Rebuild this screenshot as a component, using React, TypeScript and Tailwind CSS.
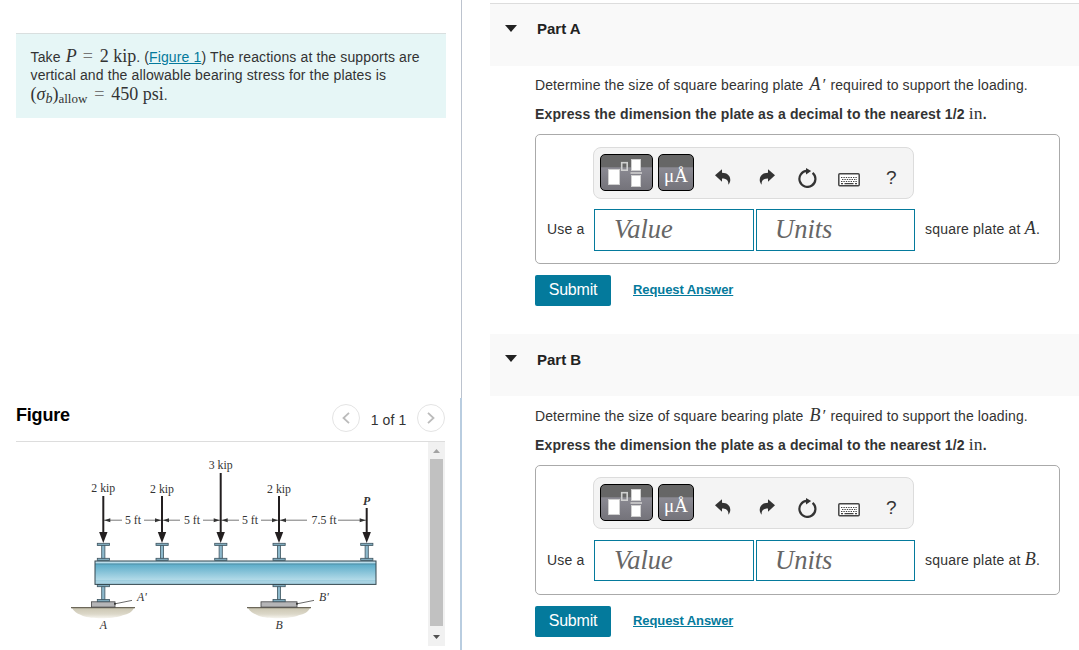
interface PartProps {
  letter: string;
}

const loads = [
  { x: 103.3, top: 496, label: '2 kip', labelY: 491.5 },
  { x: 162, top: 496, label: '2 kip', labelY: 492.5 },
  { x: 220.7, top: 473, label: '3 kip', labelY: 468.5 },
  { x: 279, top: 496, label: '2 kip', labelY: 492.5 },
  { x: 366.7, top: 508, label: 'P', labelY: 504.5 },
];

const spans = [
  { from: 103.3, to: 162, textX: 133, label: '5 ft', gapL: 122, gapR: 144 },
  { from: 162, to: 220.7, textX: 192, label: '5 ft', gapL: 180, gapR: 203 },
  { from: 220.7, to: 279, textX: 250, label: '5 ft', gapL: 239, gapR: 261 },
  { from: 279, to: 366.7, textX: 324, label: '7.5 ft', gapL: 307, gapR: 338 },
];

const supports = [
  { x: 103.3, padL: 91.5, padR: 115, groundL: 71, label: 'A', tagX: 137 },
  { x: 279, padL: 261, padR: 297, groundL: 247, label: 'B', tagX: 319 },
];

// Short I-section that carries the load into the beam
function Stub({ x, y }: { x: number; y: number }) {
  return (
    <g stroke="#3f5560" strokeWidth="0.8">
      <rect x={x - 1.6} y={y + 1.5} width="3.2" height="14" fill="#8db9cc" />
      <rect x={x - 6} y={y} width="12.2" height="2.2" fill="#7fa9bb" />
      <rect x={x - 6} y={y + 15} width="12.2" height="2.2" fill="#7fa9bb" />
    </g>
  );
}

function BeamFigure() {
  return (
    <svg viewBox="16 442 412 204" className="h-[204px] w-[412px] shrink-0" fontFamily="'Liberation Serif', serif" fontSize="11.8" fill="#333">
      <defs>
        <linearGradient id="beam" x1="0" y1="0" x2="0" y2="1">
          <stop offset="0.1" stopColor="#57a9c7" />
          <stop offset="0.8" stopColor="#b0d9e7" />
          <stop offset="1" stopColor="#a5d0e0" />
        </linearGradient>
        <linearGradient id="soil" x1="0" y1="0" x2="0" y2="1">
          <stop offset="0" stopColor="#cbc6b2" />
          <stop offset="0.6" stopColor="#dcd8c9" />
          <stop offset="1" stopColor="#f6f4ee" />
        </linearGradient>
      </defs>

      {supports.map(s => (
        <g key={s.label}>
          <path d={`M${s.groundL + 1} 608h62c-3 6-8 6-13 8-9 3-30 3-38 0-4-2-8-3-11-8z`} fill="url(#soil)" />
          <path d={`M${s.groundL} 607.6h64`} stroke="#6c6759" strokeWidth="1.3" />
          <rect x={s.padL} y="601.8" width={s.padR - s.padL} height="5.3" fill="#b5b5b7" stroke="#444" strokeWidth="0.8" />
          <Stub x={s.x} y={584.5} />
          <path d={`M${s.padR - 1} 604l18-3.6`} stroke="#444" strokeWidth="0.8" />
          <circle cx={s.padR} cy="603.8" r="1" />
          <text x={s.tagX} y="600.5" fontStyle="italic">{s.label}'</text>
          <text x={s.x} y="628.5" textAnchor="middle" fontStyle="italic">{s.label}</text>
        </g>
      ))}

      <rect x="95" y="561" width="281" height="23" fill="url(#beam)" />
      <rect x="95" y="561" width="281" height="2.5" fill="#b9dcea" />
      <path d="M95 564h281" stroke="#4d8499" strokeWidth="0.7" />
      <path d="M95 580.7h281" stroke="#8fc4d7" strokeWidth="0.6" />
      <rect x="95" y="561" width="281" height="23.4" fill="none" stroke="#34474f" strokeWidth="1" />

      {spans.map(s => (
        <g key={s.from}>
          <path d={`M${s.from} 520.2H${s.gapL}M${s.gapR} 520.2H${s.to}`} stroke="#555" strokeWidth="0.8" />
          <path d={`M${s.from + 1} 520.2l6-2v4zM${s.to - 1} 520.2l-6-2v4z`} />
          <text x={s.textX} y="523.5" textAnchor="middle">{s.label}</text>
        </g>
      ))}

      {loads.map(l => (
        <g key={l.x}>
          <Stub x={l.x} y={543.3} />
          <path d={`M${l.x} ${l.top}V534`} stroke="#231f20" strokeWidth="2" />
          <path d={`M${l.x - 4.2} 532h8.4l-4.2 11z`} fill="#231f20" />
          <text x={l.x} y={l.labelY} textAnchor="middle" fontStyle={l.label === 'P' ? 'italic' : 'normal'} fontWeight={l.label === 'P' ? 700 : 400}>
            {l.label}
          </text>
        </g>
      ))}
    </svg>
  );
}

function Toolbar() {
  return (
    <div className="flex h-[52px] w-[321px] items-start rounded-lg border border-[#dcdcdc] bg-[#f4f4f4] pt-[6px] pl-[6px] text-[#333]">
      <button className="h-[37px] w-[53px] rounded-[5px] border border-black bg-linear-to-b from-[#666] from-35% via-[#8b8a93] via-36% to-[#74737a]">
        <svg viewBox="0 0 51 35" className="h-[35px] w-[51px]" fill="#fff" stroke="#d0d0d0">
          <rect x="7.5" y="14.5" width="11" height="15" />
          <rect x="20.7" y="7.7" width="5.5" height="7.5" fill="none" strokeWidth="1.6" />
          <rect x="30.5" y="4.5" width="9" height="11" />
          <path d="M29.5 18h11.5" strokeWidth="1.6" />
          <rect x="30.5" y="20.5" width="9" height="11" />
        </svg>
      </button>
      <button className="ml-[5px] h-[37px] w-[36px] rounded-[5px] border border-black bg-linear-to-b from-[#666] from-35% via-[#8b8a93] via-36% to-[#74737a] pt-[5px] font-['Liberation_Serif',serif] text-[19px] leading-[32px] text-white">
        μÅ
      </button>
      <svg viewBox="0 0 16 16" className="mt-[15px] ml-[21px] size-4" fill="currentColor">
        <path d="M0 6.3 7 .3v3.500c5 .1 8.300 2.500 8.300 7.200 0 1.800-.8 3.500-2 4.700.5-3.700-1.200-6.300-6.300-6.300v3.400z" />
      </svg>
      <svg viewBox="0 0 16 16" className="mt-[15px] ml-[28px] size-4" fill="currentColor">
        <path d="M16 6.3 9 .3v3.500C4 3.900.7 6.300.7 11c0 1.800.8 3.500 2 4.700-.5-3.700 1.200-6.300 6.300-6.300v3.400z" />
      </svg>
      <svg viewBox="0 0 20 20" className="mt-[14px] ml-[22px] size-5" fill="none" stroke="currentColor" strokeWidth="2.2">
        <path d="M15.600 4.800A8 8 0 1 1 10 2.900" />
        <path d="M9 0l5.200 3-5.200 3.400z" fill="currentColor" stroke="none" />
      </svg>
      <svg viewBox="0 0 22 14" className="mt-[19px] ml-[21px] h-3.5 w-[22px]" fill="#fff" stroke="#444">
        <rect x=".8" y=".8" width="20.4" height="12" rx="1" strokeWidth="1.5" />
        <path d="M3 4.500h16M4 6.500h15M3 8.500h16" strokeWidth="1.2" strokeDasharray="1.4 1" />
        <path d="M3 10.700h2M6.500 10.700h9M17 10.700h2" strokeWidth="1.2" />
      </svg>
      <span className="mt-[14px] ml-[26px] text-[19px] leading-5">?</span>
    </div>
  );
}

function Part({ letter }: PartProps) {
  return (
    <section className="h-[330.67px]">
      <div className="flex h-[62px] items-start bg-[#f9f9f9] pt-[15.3px] pl-[15px]">
        <svg viewBox="0 0 12 7" className="mt-[5.7px] h-[7px] w-3" fill="#222">
          <path d="M0 0h12L6 7z" />
        </svg>
        <h2 className="ml-5 text-[15px] leading-5 font-bold text-[#222]">Part {letter}</h2>
      </div>
      <div className="pt-[9.3px] pl-[45px]">
        <p className="h-[29px] text-[14px] leading-[20px] tracking-[0.11px] whitespace-nowrap">
          Determine the size of square bearing plate{' '}
          <span className="inline-block w-[23px] pl-[2px] font-['Liberation_Serif',serif] text-[18px] leading-[18px]"><i>{letter}</i><i className="ml-px text-[17px] leading-3">′</i></span>
          required to support the loading.
        </p>
        <p className="h-[30px] text-[14px] leading-[20px] font-bold tracking-[0.14px] whitespace-nowrap">
          Express the dimension the plate as a decimal to the nearest 1/2 <span className="font-['Liberation_Serif',serif] text-[17.5px] leading-4 font-normal">in</span>.
        </p>
        <div className="h-[130px] w-[525px] rounded-[5px] border border-[#aaa] pt-[11.7px] pl-[11px]">
          <div className="pl-[46px]">
            <Toolbar />
          </div>
          <div className="mt-[10.5px] flex h-[41.5px] items-center text-[14px] tracking-[0.2px]">
            <span className="w-[47px] pb-px">Use a</span>
            <div className="h-full w-[160px] border border-[#047a9c] pl-[19px] font-['Liberation_Serif',serif] text-[26.5px] leading-[39px] tracking-normal text-[#666] italic">Value</div>
            <div className="ml-0.5 h-full w-[159px] border border-[#047a9c] pl-[18px] font-['Liberation_Serif',serif] text-[26.5px] leading-[39px] tracking-normal text-[#666] italic">Units</div>
            <span className="ml-2.5 pb-px whitespace-nowrap">
              square plate at <span className="font-['Liberation_Serif',serif] text-[18px] leading-4 italic">{letter}</span>.
            </span>
          </div>
        </div>
        <div className="mt-[11px] flex items-center">
          <button className="h-[31px] w-[76px] rounded-[2px] bg-[#047a9c] pb-px text-[16px] tracking-[-0.2px] text-white">Submit</button>
          <a className="ml-[22px] pb-px text-[13px] font-bold tracking-[-0.08px] text-[#047a9c] underline">Request Answer</a>
        </div>
      </div>
    </section>
  );
}

export default function App() {
  return (
    <div className="flex h-[650px] w-[1079px] overflow-hidden bg-white font-['Liberation_Sans',Arial,sans-serif] text-[#333]">
      <aside className="flex w-[462px] shrink-0 flex-col">
        <div className="h-[398px] border-r border-[#bcc3ce] pt-[33px] pl-4">
          <div className="h-[85px] w-[430px] border-t border-[#d9dfdf] bg-[#e6f6f6] pt-[14px] pl-[14.5px] text-[14px] leading-[18.3px] tracking-[0.13px] whitespace-nowrap">
            <p>
              Take <span className="font-['Liberation_Serif',serif] text-[18px] leading-4 tracking-normal"><i className="inline-block w-[18px] pl-px">P</i><span className="inline-block w-[17px] text-[#777]">=</span>2 kip</span>. (<a className="text-[#047a9c] underline">Figure 1</a>) The reactions at the supports are
            </p>
            <p>vertical and the allowable bearing stress for the plates is</p>
            <p className="font-['Liberation_Serif',serif] text-[18px] tracking-normal">
              (<i>σ</i><i className="relative top-[3px] text-[14px] leading-3">b</i>)<span className="relative top-[3px] text-[13px] leading-3">allow</span>
              <span className="inline-block w-[24px] text-center text-[#777]">=</span>450 psi<span className="font-['Liberation_Sans',sans-serif] text-[14px]">.</span>
            </p>
          </div>
        </div>
        <div className="h-[252px] border-r-2 border-[#b9cde0] pl-4">
          <div className="flex h-[44px] w-[429px] items-start border-b border-[#ddd] pt-[6px]">
            <h2 className="text-[18px] leading-[22px] font-bold tracking-[-0.2px] text-black">Figure</h2>
            <div className="ml-auto flex items-center">
              <button className="flex size-7 items-center justify-center rounded-full border border-[#e4e4e4]">
                <svg viewBox="0 0 8 12" className="h-3 w-2" fill="none" stroke="#bbb" strokeWidth="1.8"><path d="M7 .8 1.500 6 7 11.200" /></svg>
              </button>
              <span className="mt-1 w-[57px] text-center text-[14px] tracking-[0.1px]">1 of 1</span>
              <button className="flex size-7 items-center justify-center rounded-full border border-[#e4e4e4]">
                <svg viewBox="0 0 8 12" className="h-3 w-2" fill="none" stroke="#bbb" strokeWidth="1.8"><path d="M1 .8 6.500 6 1 11.200" /></svg>
              </button>
            </div>
          </div>
          <div className="flex">
            <BeamFigure />
            <div className="flex h-[204px] w-[17px] flex-col items-center bg-[#f1f1f1]">
              <svg viewBox="0 0 7 4" className="my-[6.5px] h-1 w-[7px] shrink-0" fill="#a3a3a3"><path d="M0 4h7L3.500 0z" /></svg>
              <div className="h-[167px] w-[13px] shrink-0 bg-[#c1c1c1]" />
              <svg viewBox="0 0 7 4" className="mt-[9px] h-1 w-[7px] shrink-0" fill="#505050"><path d="M0 0h7L3.500 4z" /></svg>
            </div>
          </div>
        </div>
      </aside>
      <main className="ml-7 flex-1 pt-[2.7px]">
        <div className="border-t border-[#ddd]">
          <Part letter="A" />
          <Part letter="B" />
        </div>
      </main>
    </div>
  );
}
